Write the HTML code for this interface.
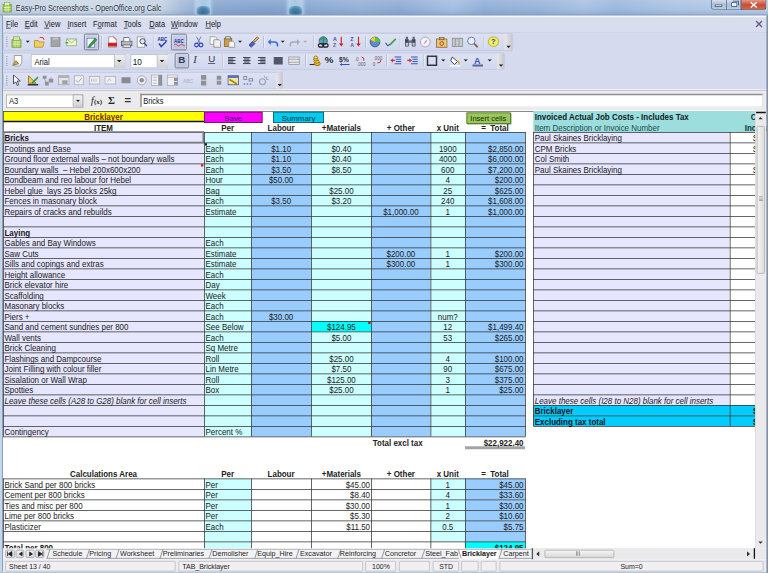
<!DOCTYPE html><html><head><meta charset="utf-8"><style>
html,body{margin:0;padding:0;width:768px;height:573px;overflow:hidden;background:#fff}
#w{position:absolute;left:0;top:0;width:1024px;height:764px;transform:scale(0.75);transform-origin:0 0;overflow:hidden;font-family:"Liberation Sans",sans-serif}
#w>div,#w>svg{position:absolute}
.t{white-space:nowrap;line-height:14px}
</style></head><body><div id="w">
<div style="left:0;top:0;width:1024px;height:21px;background:linear-gradient(90deg,#c3d1e2 0%,#cbd7e6 10%,#c4d2e3 21%,#a6bcd9 23.5%,#89a6cf 27%,#83a2cd 35%,#8ba9d2 42%,#93b0d6 47%,#8eaad4 52%,#a3bde0 59%,#90aed6 63%,#97b3da 70%,#a6c0e1 76%,#9ab7dc 80%,#abc3e3 88%,#b6cce6 100%)"></div>
<div style="left:0;top:0;width:1024px;height:21px;background:linear-gradient(180deg,rgba(255,255,255,.15) 0%,rgba(255,255,255,0) 60%,rgba(90,120,160,.25) 100%)"></div>
<div style="left:256.7px;top:0;width:28px;height:20px;background:linear-gradient(90deg,rgba(200,225,245,0) 0%,rgba(190,218,240,.75) 20%,rgba(175,205,232,.8) 50%,rgba(190,218,240,.75) 80%,rgba(200,225,245,0) 100%)"></div>
<div style="left:261.7px;top:8px;width:18px;height:12px;border-radius:40% 40% 30% 30%;background:radial-gradient(ellipse at 50% 80%,#2f6e98 0%,#4a84ad 50%,rgba(110,160,200,0) 100%)"></div>
<div style="left:380px;top:0;width:28px;height:20px;background:linear-gradient(90deg,rgba(200,225,245,0) 0%,rgba(190,218,240,.75) 20%,rgba(175,205,232,.8) 50%,rgba(190,218,240,.75) 80%,rgba(200,225,245,0) 100%)"></div>
<div style="left:385px;top:8px;width:18px;height:12px;border-radius:40% 40% 30% 30%;background:radial-gradient(ellipse at 50% 80%,#2f6e98 0%,#4a84ad 50%,rgba(110,160,200,0) 100%)"></div>
<div style="left:0;top:19px;width:1024px;height:2px;background:#8a9ab0;opacity:.7"></div>
<svg style="left:3px;top:2px" width="13" height="15" viewBox="0 0 13 15"><rect x="1" y="4" width="11" height="10" fill="#9cc54a" stroke="#6f9a2a"/><rect x="3" y="1" width="7" height="4" fill="#e8f0c0" stroke="#8fae50"/><path d="M2 8h9M2 11h9M5 5v9M8 5v9" stroke="#e8f5c8"/></svg>
<div class="t" style="left:20.5px;top:2.5px;font-size:11.5px;transform:scaleX(0.85);transform-origin:0 0;color:#1e2a3a;text-shadow:0 0 4px #e8f0f8,0 0 2px #e8f0f8">Easy-Pro Screenshots - OpenOffice.org Calc</div>
<div style="left:948px;top:0;width:40px;height:13px;border:1px solid #5a6f8a;border-top:none;border-radius:0 0 0 4px;background:linear-gradient(#d4e0ee,#a9bdd6 55%,#b8cce2);box-sizing:border-box"></div>
<div style="left:968px;top:0px;width:1px;height:13px;background:#5a6f8a"></div>
<div style="left:953px;top:6px;width:10px;height:3px;background:#f4f6fa;border:1px solid #3a4a60;box-sizing:border-box"></div>
<div style="left:975px;top:3px;width:8px;height:6px;border:1px solid #3a4a60;background:#e8eef6;box-sizing:border-box"></div>
<div style="left:977px;top:1px;width:8px;height:6px;border:1px solid #3a4a60;border-left:none;border-bottom:none;box-sizing:border-box"></div>
<div style="left:988px;top:0;width:34px;height:13px;border:1px solid #6a2a20;border-top:none;border-radius:0 0 4px 0;background:linear-gradient(#e49a86,#c94a30 55%,#d8664a);box-sizing:border-box"></div>
<svg style="left:999px;top:2px" width="12" height="9"><path d="M2 1l8 7M10 1l-8 7" stroke="#f4f4f4" stroke-width="2.2"/></svg>
<div style="left:0px;top:21px;width:4px;height:743px;background:#c3d6eb"></div>
<div style="left:3px;top:21px;width:1px;height:743px;background:#7a8ca4"></div>
<div style="left:1022px;top:21px;width:2px;height:743px;background:#8292a6"></div>
<div style="left:0px;top:762px;width:1024px;height:2px;background:#b5c8dd"></div>
<div style="left:4px;top:21px;width:1018px;height:22px;background:#d8ddf0"></div>
<div style="left:4px;top:21px;width:1018px;height:1.5px;background:#f8f9fd"></div>
<div style="left:4px;top:43px;width:1018px;height:1px;background:#c4c9de"></div>
<div class="t" style="left:8.3px;top:25px;font-size:11.5px;transform:scaleX(0.87);transform-origin:0 0;color:#1a1a1a"><u>F</u>ile</div>
<div class="t" style="left:33px;top:25px;font-size:11.5px;transform:scaleX(0.87);transform-origin:0 0;color:#1a1a1a"><u>E</u>dit</div>
<div class="t" style="left:59px;top:25px;font-size:11.5px;transform:scaleX(0.87);transform-origin:0 0;color:#1a1a1a"><u>V</u>iew</div>
<div class="t" style="left:89.6px;top:25px;font-size:11.5px;transform:scaleX(0.87);transform-origin:0 0;color:#1a1a1a"><u>I</u>nsert</div>
<div class="t" style="left:123.6px;top:25px;font-size:11.5px;transform:scaleX(0.87);transform-origin:0 0;color:#1a1a1a">F<u>o</u>rmat</div>
<div class="t" style="left:164.8px;top:25px;font-size:11.5px;transform:scaleX(0.87);transform-origin:0 0;color:#1a1a1a"><u>T</u>ools</div>
<div class="t" style="left:198.7px;top:25px;font-size:11.5px;transform:scaleX(0.87);transform-origin:0 0;color:#1a1a1a"><u>D</u>ata</div>
<div class="t" style="left:228px;top:25px;font-size:11.5px;transform:scaleX(0.87);transform-origin:0 0;color:#1a1a1a"><u>W</u>indow</div>
<div class="t" style="left:274.4px;top:25px;font-size:11.5px;transform:scaleX(0.87);transform-origin:0 0;color:#1a1a1a"><u>H</u>elp</div>
<svg style="left:1007px;top:27px" width="10" height="10"><path d="M1 1l8 8M9 1l-8 8" stroke="#5a6070" stroke-width="1.8"/></svg>
<div style="left:4px;top:44px;width:1018px;height:75px;background:#d5daef"></div>
<div style="left:4px;top:44px;width:680px;height:24px;background:linear-gradient(#dde2f3,#d2d8ee);border:1px solid #c0c6dc;border-radius:2px;box-sizing:border-box"></div>
<div style="left:8px;top:49px;width:2px;height:1px;background:#8a90a8"></div>
<div style="left:8px;top:52px;width:2px;height:1px;background:#8a90a8"></div>
<div style="left:8px;top:55px;width:2px;height:1px;background:#8a90a8"></div>
<div style="left:8px;top:58px;width:2px;height:1px;background:#8a90a8"></div>
<div style="left:8px;top:61px;width:2px;height:1px;background:#8a90a8"></div>
<div style="left:673px;top:45px;width:10px;height:22px;background:linear-gradient(90deg,#e8e8ec,#c8c8cc);"></div>
<svg style="left:675px;top:60px" width="7" height="5"><path d="M0 1h6l-3 3z" fill="#222"/></svg>
<div style="left:4px;top:70px;width:669px;height:23px;background:linear-gradient(#dde2f3,#d2d8ee);border:1px solid #c0c6dc;border-radius:2px;box-sizing:border-box"></div>
<div style="left:8px;top:75px;width:2px;height:1px;background:#8a90a8"></div>
<div style="left:8px;top:78px;width:2px;height:1px;background:#8a90a8"></div>
<div style="left:8px;top:81px;width:2px;height:1px;background:#8a90a8"></div>
<div style="left:8px;top:84px;width:2px;height:1px;background:#8a90a8"></div>
<div style="left:8px;top:87px;width:2px;height:1px;background:#8a90a8"></div>
<div style="left:663px;top:71px;width:9px;height:21px;background:linear-gradient(90deg,#e8e8ec,#c8c8cc);"></div>
<svg style="left:665px;top:85px" width="7" height="5"><path d="M0 1h6l-3 3z" fill="#222"/></svg>
<div style="left:4px;top:96px;width:373px;height:23px;background:linear-gradient(#dde2f3,#d2d8ee);border:1px solid #c0c6dc;border-radius:2px;box-sizing:border-box"></div>
<div style="left:8px;top:101px;width:2px;height:1px;background:#8a90a8"></div>
<div style="left:8px;top:104px;width:2px;height:1px;background:#8a90a8"></div>
<div style="left:8px;top:107px;width:2px;height:1px;background:#8a90a8"></div>
<div style="left:8px;top:110px;width:2px;height:1px;background:#8a90a8"></div>
<div style="left:8px;top:113px;width:2px;height:1px;background:#8a90a8"></div>
<div style="left:368px;top:97px;width:9px;height:21px;background:linear-gradient(90deg,#e8e8ec,#c8c8cc);"></div>
<svg style="left:370px;top:111px" width="7" height="5"><path d="M0 1h6l-3 3z" fill="#222"/></svg>
<svg style="left:13.7px;top:48.0px" width="16" height="16" viewBox="0 0 16 16"><rect x="2" y="5" width="12" height="10" fill="#a8cc55" stroke="#6e9a2c"/><path d="M3 8h10M3 11h10M6 6v9M10 6v9" stroke="#e4f2c0"/><rect x="4" y="1" width="8" height="5" fill="#d8e8a8" stroke="#88a850"/></svg>
<svg style="left:34.3px;top:54px" width="7" height="5"><path d="M0 0h6l-3 3z" fill="#222"/></svg>
<svg style="left:45.3px;top:48.0px" width="16" height="16" viewBox="0 0 16 16"><path d="M1 6h5l1 2h7l-2 7H1z" fill="#f0d060" stroke="#b08820"/><path d="M8 2l4 0 2 3" stroke="#e04040" stroke-width="1.5" fill="none"/></svg>
<svg style="left:66.3px;top:48.0px" width="16" height="16" viewBox="0 0 16 16"><rect x="2" y="2" width="12" height="12" fill="#a4a4a4" stroke="#8a8a8a"/><rect x="4" y="2" width="8" height="3" fill="#c0c0c0"/></svg>
<svg style="left:86.7px;top:48.0px" width="16" height="16" viewBox="0 0 16 16"><rect x="2" y="4" width="13" height="9" fill="#f4f4d8" stroke="#88a870"/><path d="M2 4l6.5 5 6.5-5" stroke="#88a870" fill="none"/><path d="M0 9h4" stroke="#40b040" stroke-width="2"/></svg>
<div style="left:112px;top:45px;width:20px;height:22px;background:linear-gradient(#c9d0e6,#b9c2df);border:1px solid #5c6478;border-radius:2px;box-sizing:border-box;box-shadow:inset 0 0 0 1px #e4e8f4"></div>
<svg style="left:114.0px;top:48.0px" width="16" height="16" viewBox="0 0 16 16"><rect x="2" y="3" width="10" height="12" fill="#fff" stroke="#6878a0"/><path d="M5 12l8-9 2 2-8 9-3 1z" fill="#30a040" stroke="#207030"/></svg>
<div style="left:135px;top:48px;width:1px;height:16px;background:#b0b6cc"></div>
<div style="left:136px;top:48px;width:1px;height:16px;background:#f0f2fa"></div>
<svg style="left:142.0px;top:48.0px" width="16" height="16" viewBox="0 0 16 16"><path d="M3 1h7l3 3v11H3z" fill="#fff" stroke="#888"/><rect x="2" y="9" width="12" height="5" fill="#d82020"/><path d="M9 1l4 4" stroke="#d82020"/></svg>
<svg style="left:161.3px;top:48.0px" width="16" height="16" viewBox="0 0 16 16"><rect x="1" y="7" width="14" height="6" fill="#b8b8c0" stroke="#505058"/><path d="M4 7V2h7l1 1v4" fill="#fff" stroke="#505058"/><rect x="3" y="12" width="10" height="3" fill="#fff" stroke="#505058"/></svg>
<svg style="left:181.3px;top:48.0px" width="16" height="16" viewBox="0 0 16 16"><path d="M2 1h8l2 2v12H2z" fill="#fff" stroke="#888"/><circle cx="9" cy="7" r="3.5" fill="#d8e8f8" stroke="#405070" stroke-width="1.3"/><path d="M11.5 9.5l3.5 4" stroke="#405070" stroke-width="2"/></svg>
<div style="left:204px;top:48px;width:1px;height:16px;background:#b0b6cc"></div>
<div style="left:205px;top:48px;width:1px;height:16px;background:#f0f2fa"></div>
<svg style="left:209.3px;top:48.0px" width="16" height="16" viewBox="0 0 16 16"><text x="1" y="7" font-size="6" font-family="Liberation Sans" font-weight="bold" fill="#2030a0">ABC</text><path d="M3 10l3 4 7-7" stroke="#3040c0" stroke-width="2" fill="none"/></svg>
<div style="left:228px;top:45px;width:21px;height:22px;background:linear-gradient(#c9d0e6,#b9c2df);border:1px solid #5c6478;border-radius:2px;box-sizing:border-box;box-shadow:inset 0 0 0 1px #e4e8f4"></div>
<svg style="left:230.7px;top:48.0px" width="16" height="16" viewBox="0 0 16 16"><text x="1" y="9" font-size="6" font-family="Liberation Sans" font-weight="bold" fill="#2030a0">ABC</text><path d="M1 12q2-2 4 0t4 0 4 0 3 0" stroke="#e02020" fill="none"/></svg>
<svg style="left:257.3px;top:48.0px" width="16" height="16" viewBox="0 0 16 16"><path d="M5 1l5 9M11 1l-5 9" stroke="#707890" stroke-width="1.3"/><circle cx="5" cy="12" r="2.5" fill="none" stroke="#3040c0" stroke-width="1.5"/><circle cx="11" cy="12" r="2.5" fill="none" stroke="#3040c0" stroke-width="1.5"/></svg>
<svg style="left:278.7px;top:48.0px" width="16" height="16" viewBox="0 0 16 16"><path d="M1 1h7l2 2v8H1z" fill="#f8f8f8" stroke="#909090"/><path d="M6 5h7l2 2v8H6z" fill="#f0f0f0" stroke="#808080"/></svg>
<svg style="left:298.0px;top:48.0px" width="16" height="16" viewBox="0 0 16 16"><rect x="1" y="3" width="10" height="11" fill="#c8a040" stroke="#806020"/><rect x="3" y="1" width="6" height="3" fill="#ddd" stroke="#666"/><path d="M7 7h6l2 2v6H7z" fill="#f4f4f4" stroke="#808080"/></svg>
<svg style="left:317px;top:54px" width="7" height="5"><path d="M0 0h6l-3 3z" fill="#222"/></svg>
<svg style="left:330.0px;top:48.0px" width="16" height="16" viewBox="0 0 16 16"><path d="M2 12l5-5 3 3-5 5z" fill="#5060c0" stroke="#303880"/><path d="M8 6l5-5 2 2-5 5z" fill="#d8b060" stroke="#806020"/></svg>
<div style="left:350.7px;top:48px;width:1px;height:16px;background:#b0b6cc"></div>
<div style="left:351.7px;top:48px;width:1px;height:16px;background:#f0f2fa"></div>
<svg style="left:356.0px;top:48.0px" width="16" height="16" viewBox="0 0 16 16"><path d="M5 4L1 8l4 4V9h5a3 3 0 0 1 3 3v2h2v-2a5 5 0 0 0-5-5H5z" fill="#3a6ad8"/></svg>
<svg style="left:374.3px;top:54px" width="7" height="5"><path d="M0 0h6l-3 3z" fill="#222"/></svg>
<svg style="left:385.3px;top:48.0px" width="16" height="16" viewBox="0 0 16 16"><path d="M11 4l4 4-4 4V9H6a3 3 0 0 0-3 3v2H1v-2a5 5 0 0 1 5-5h5z" fill="#a8acb8"/></svg>
<svg style="left:403.7px;top:54px" width="7" height="5"><path d="M0 0h6l-3 3z" fill="#a8a8b0"/></svg>
<div style="left:418px;top:48px;width:1px;height:16px;background:#b0b6cc"></div>
<div style="left:419px;top:48px;width:1px;height:16px;background:#f0f2fa"></div>
<svg style="left:423.3px;top:48.0px" width="16" height="16" viewBox="0 0 16 16"><circle cx="8" cy="6.5" r="5.5" fill="#58a0c8" stroke="#2a5a7a"/><path d="M3 5q5-3 10 0M8 1v11" stroke="#2a8040" stroke-width="1.2" fill="none"/><path d="M4 4l3 2 3-3 2 2" fill="#50b050"/><ellipse cx="5" cy="12.5" rx="3.5" ry="2.3" fill="none" stroke="#202020" stroke-width="1.5"/><ellipse cx="11" cy="12.5" rx="3.5" ry="2.3" fill="none" stroke="#202020" stroke-width="1.5"/></svg>
<svg style="left:444.0px;top:48.0px" width="16" height="16" viewBox="0 0 16 16"><text x="0" y="7" font-size="7" font-family="Liberation Sans" font-weight="bold" fill="#3050b0">A</text><text x="0" y="15" font-size="7" font-family="Liberation Sans" font-weight="bold" fill="#606070">Z</text><path d="M11 1v11" stroke="#d02020" stroke-width="1.5"/><path d="M8 10l3 4 3-4z" fill="#d02020"/></svg>
<svg style="left:466.7px;top:48.0px" width="16" height="16" viewBox="0 0 16 16"><text x="0" y="7" font-size="7" font-family="Liberation Sans" font-weight="bold" fill="#3050b0">Z</text><text x="0" y="15" font-size="7" font-family="Liberation Sans" font-weight="bold" fill="#606070">A</text><path d="M11 1v11" stroke="#d02020" stroke-width="1.5"/><path d="M8 10l3 4 3-4z" fill="#d02020"/></svg>
<div style="left:486.7px;top:48px;width:1px;height:16px;background:#b0b6cc"></div>
<div style="left:487.7px;top:48px;width:1px;height:16px;background:#f0f2fa"></div>
<svg style="left:492.0px;top:48.0px" width="16" height="16" viewBox="0 0 16 16"><circle cx="8" cy="8" r="6.5" fill="#5a8ad8" stroke="#404860"/><path d="M8 8V1.5A6.5 6.5 0 0 1 14.5 8z" fill="#60c040"/><path d="M8 8L2 5A6.5 6.5 0 0 1 8 1.5z" fill="#f0d020"/></svg>
<svg style="left:512.7px;top:48.0px" width="16" height="16" viewBox="0 0 16 16"><path d="M1 9l3 4 3-2" stroke="#4050a0" stroke-width="1.5" fill="none"/><path d="M6 11l8-8 1.5 1.5-8 8z" fill="#40a040"/></svg>
<div style="left:533.3px;top:48px;width:1px;height:16px;background:#b0b6cc"></div>
<div style="left:534.3px;top:48px;width:1px;height:16px;background:#f0f2fa"></div>
<svg style="left:539.3px;top:48.0px" width="16" height="16" viewBox="0 0 16 16"><rect x="1" y="4" width="5" height="10" rx="1" fill="#404858"/><rect x="10" y="4" width="5" height="10" rx="1" fill="#404858"/><rect x="5" y="6" width="6" height="3" fill="#606878"/><rect x="2" y="1" width="3" height="4" fill="#606878"/><rect x="11" y="1" width="3" height="4" fill="#606878"/><rect x="2" y="9" width="3" height="4" fill="#c0c8d8"/><rect x="11" y="9" width="3" height="4" fill="#c0c8d8"/></svg>
<svg style="left:559.3px;top:48.0px" width="16" height="16" viewBox="0 0 16 16"><circle cx="8" cy="8" r="6.5" fill="#f4f4f8" stroke="#9098b0"/><path d="M11 4L7 9l-2 3 4-4z" fill="#e03030"/></svg>
<svg style="left:580.7px;top:48.0px" width="16" height="16" viewBox="0 0 16 16"><rect x="1" y="4" width="14" height="11" fill="#e8c870" stroke="#806020"/><rect x="5" y="2" width="6" height="3" fill="none" stroke="#806020"/><circle cx="8" cy="10" r="2.5" fill="none" stroke="#d03030" stroke-width="1.3"/></svg>
<svg style="left:602.0px;top:48.0px" width="16" height="16" viewBox="0 0 16 16"><rect x="1" y="3" width="14" height="11" fill="#c8c8d0" stroke="#888"/><path d="M5 3v11M10 3v11" stroke="#888"/></svg>
<svg style="left:622.0px;top:48.0px" width="16" height="16" viewBox="0 0 16 16"><circle cx="6.5" cy="6.5" r="5" fill="#e8f0fa" stroke="#6070a0" stroke-width="1.2"/><path d="M10 10l5 5" stroke="#807050" stroke-width="2.5"/></svg>
<div style="left:644px;top:48px;width:1px;height:16px;background:#b0b6cc"></div>
<div style="left:645px;top:48px;width:1px;height:16px;background:#f0f2fa"></div>
<svg style="left:650.0px;top:48.0px" width="16" height="16" viewBox="0 0 16 16"><ellipse cx="8" cy="7.5" rx="7" ry="6.5" fill="#f0f060" stroke="#a0a020"/><path d="M5 15l2-3h2z" fill="#f0f060"/><text x="4.5" y="11" font-size="10" font-family="Liberation Sans" font-weight="bold" fill="#5030a0">?</text></svg>
<svg style="left:14.7px;top:73.3px" width="16" height="16" viewBox="0 0 16 16"><path d="M4 1h10v10l-3 4H4z" fill="#fff" stroke="#888"/><path d="M2 14l4-6 4 4z" fill="#d8b060" stroke="#806020"/></svg>
<div style="left:41.3px;top:72px;width:125.4px;height:18.7px;background:#fff;border:1px solid #a8b0c8;box-sizing:border-box"></div>
<div style="left:152px;top:73px;width:13.3px;height:16.7px;background:linear-gradient(#f0f0f0,#d0d0d4);border-left:1px solid #a8b0c8"></div>
<svg style="left:155.7px;top:80.3px" width="7" height="5"><path d="M0 0h6l-3 3z" fill="#222"/></svg>
<div class="t" style="left:46px;top:74.5px;font-size:11px;color:#111;transform:scaleX(0.92);transform-origin:0 0">Arial</div>
<div style="left:173.9px;top:72px;width:50.1px;height:18.7px;background:#fff;border:1px solid #a8b0c8;box-sizing:border-box"></div>
<div style="left:209.3px;top:73px;width:13.4px;height:16.7px;background:linear-gradient(#f0f0f0,#d0d0d4);border-left:1px solid #a8b0c8"></div>
<svg style="left:213px;top:80.3px" width="7" height="5"><path d="M0 0h6l-3 3z" fill="#222"/></svg>
<div class="t" style="left:177px;top:74.5px;font-size:11px;color:#111">10</div>
<div style="left:233.3px;top:71.3px;width:18.7px;height:20px;background:linear-gradient(#c9d0e6,#b9c2df);border:1px solid #5c6478;border-radius:2px;box-sizing:border-box;box-shadow:inset 0 0 0 1px #e4e8f4"></div>
<div class="t" style="left:237.5px;top:73px;font-size:13px;font-weight:bold;color:#30384a">B</div>
<div class="t" style="left:257.5px;top:73px;font-size:14px;font-style:italic;color:#30384a;font-family:'Liberation Serif',serif">I</div>
<div class="t" style="left:277.5px;top:72px;font-size:13px;color:#30384a"><u>U</u></div>
<div style="left:296px;top:73px;width:1px;height:16px;background:#b0b6cc"></div>
<div style="left:297px;top:73px;width:1px;height:16px;background:#f0f2fa"></div>
<svg style="left:301.3px;top:73.3px" width="16" height="16" viewBox="0 0 16 16"><rect x="3" y="3" width="10" height="1.4" fill="#404858"/><rect x="3" y="5" width="7" height="1.4" fill="#404858"/><rect x="3" y="7" width="10" height="1.4" fill="#404858"/><rect x="3" y="9" width="7" height="1.4" fill="#404858"/><rect x="3" y="11" width="10" height="1.4" fill="#404858"/></svg>
<svg style="left:321.3px;top:73.3px" width="16" height="16" viewBox="0 0 16 16"><rect x="3.0" y="3" width="10" height="1.4" fill="#404858"/><rect x="4.5" y="5" width="7" height="1.4" fill="#404858"/><rect x="3.0" y="7" width="10" height="1.4" fill="#404858"/><rect x="4.5" y="9" width="7" height="1.4" fill="#404858"/><rect x="3.0" y="11" width="10" height="1.4" fill="#404858"/></svg>
<svg style="left:341.3px;top:73.3px" width="16" height="16" viewBox="0 0 16 16"><rect x="3" y="3" width="10" height="1.4" fill="#404858"/><rect x="6" y="5" width="7" height="1.4" fill="#404858"/><rect x="3" y="7" width="10" height="1.4" fill="#404858"/><rect x="6" y="9" width="7" height="1.4" fill="#404858"/><rect x="3" y="11" width="10" height="1.4" fill="#404858"/></svg>
<svg style="left:363.3px;top:73.3px" width="16" height="16" viewBox="0 0 16 16"><rect x="2" y="3" width="12" height="10" fill="#505868"/></svg>
<svg style="left:384.0px;top:73.3px" width="16" height="16" viewBox="0 0 16 16"><rect x="1" y="3" width="14" height="10" fill="#e8e8e8" stroke="#909098"/><path d="M1 6h14M1 10h14" stroke="#909098"/></svg>
<div style="left:406.7px;top:73px;width:1px;height:16px;background:#b0b6cc"></div>
<div style="left:407.7px;top:73px;width:1px;height:16px;background:#f0f2fa"></div>
<svg style="left:412.0px;top:73.3px" width="16" height="16" viewBox="0 0 16 16"><path d="M1 13h7" stroke="#303030" stroke-width="1.5"/><ellipse cx="11" cy="12" rx="4" ry="2.5" fill="#e8b828" stroke="#8a6010"/><ellipse cx="10" cy="9" rx="3.5" ry="2.2" fill="#f0c838" stroke="#8a6010"/><ellipse cx="9" cy="6" rx="3" ry="2" fill="#f4d040" stroke="#8a6010"/><ellipse cx="9" cy="3.5" rx="2.5" ry="1.8" fill="#f8e060" stroke="#8a6010"/></svg>
<div class="t" style="left:433px;top:73px;font-size:13px;font-weight:bold;color:#282830">%</div>
<svg style="left:452.0px;top:73.3px" width="16" height="16" viewBox="0 0 16 16"><text x="0" y="9" font-size="9" font-family="Liberation Sans" font-weight="bold" fill="#303040">$%</text><path d="M2 13h12" stroke="#3050c0" stroke-width="1.5"/><path d="M1 13l3-2v4z" fill="#3050c0"/></svg>
<svg style="left:473.3px;top:73.3px" width="16" height="16" viewBox="0 0 16 16"><text x="0" y="8" font-size="6" font-family="Liberation Sans" fill="#606070">.0</text><text x="3" y="15" font-size="6" font-family="Liberation Sans" fill="#606070">.000</text><path d="M9 3q4 0 3 5" stroke="#d03030" fill="none" stroke-width="1.3"/></svg>
<svg style="left:494.7px;top:73.3px" width="16" height="16" viewBox="0 0 16 16"><text x="3" y="7" font-size="6" font-family="Liberation Sans" fill="#606070">.000</text><text x="2" y="15" font-size="6" font-family="Liberation Sans" fill="#606070">0</text><path d="M8 11q5 0 5-4" stroke="#d03030" fill="none" stroke-width="1.3"/></svg>
<div style="left:514.7px;top:73px;width:1px;height:16px;background:#b0b6cc"></div>
<div style="left:515.7px;top:73px;width:1px;height:16px;background:#f0f2fa"></div>
<svg style="left:520.0px;top:73.3px" width="16" height="16" viewBox="0 0 16 16"><path d="M6 3h9M8 6h7M8 9h7M6 12h9" stroke="#3050c0" stroke-width="1.3"/><path d="M1 7.5h6" stroke="#d03030" stroke-width="1.5"/><path d="M1 7.5l3-3v6z" fill="#d03030"/></svg>
<svg style="left:542.0px;top:73.3px" width="16" height="16" viewBox="0 0 16 16"><path d="M6 3h9M8 6h7M8 9h7M6 12h9" stroke="#3050c0" stroke-width="1.3"/><path d="M1 7.5h6" stroke="#d03030" stroke-width="1.5"/><path d="M7 7.5l-3-3v6z" fill="#d03030"/></svg>
<div style="left:564px;top:73px;width:1px;height:16px;background:#b0b6cc"></div>
<div style="left:565px;top:73px;width:1px;height:16px;background:#f0f2fa"></div>
<svg style="left:567.7px;top:73.3px" width="16" height="16" viewBox="0 0 16 16"><rect x="2" y="2" width="12" height="12" fill="none" stroke="#303848" stroke-width="2"/></svg>
<svg style="left:587.7px;top:79.3px" width="7" height="5"><path d="M0 0h6l-3 3z" fill="#222"/></svg>
<svg style="left:598.7px;top:73.3px" width="16" height="16" viewBox="0 0 16 16"><path d="M4 3l7 6-4 4-5-5z" fill="#fff" stroke="#303848" stroke-width="1.2"/><path d="M12 8q2 3 1 5" stroke="#e0b040" stroke-width="2" fill="none"/><rect x="1" y="14" width="14" height="2" fill="#fff"/></svg>
<svg style="left:618.3px;top:79.3px" width="7" height="5"><path d="M0 0h6l-3 3z" fill="#222"/></svg>
<svg style="left:628.7px;top:73.3px" width="16" height="16" viewBox="0 0 16 16"><text x="3" y="12" font-size="12" font-family="Liberation Sans" font-weight="bold" fill="#4050c0">A</text><rect x="1" y="13" width="14" height="3" fill="#5a6a98"/></svg>
<svg style="left:649.7px;top:79.3px" width="7" height="5"><path d="M0 0h6l-3 3z" fill="#222"/></svg>
<svg style="left:14.7px;top:99.3px" width="16" height="16" viewBox="0 0 16 16"><path d="M3 1v12l3-3 2 5 2-1-2-5h4z" fill="#fff" stroke="#202028"/></svg>
<svg style="left:36.0px;top:99.3px" width="16" height="16" viewBox="0 0 16 16"><path d="M1 14h14" stroke="#303040" stroke-width="2"/><path d="M2 2v10h10z" fill="#f0d040" stroke="#806010"/><path d="M6 11l8-8 1.5 1.5-8 8z" fill="#30a040"/></svg>
<svg style="left:56.0px;top:99.3px" width="16" height="16" viewBox="0 0 16 16"><rect x="1" y="2" width="5" height="4" fill="#909098"/><rect x="9" y="6" width="6" height="5" fill="#909098"/><rect x="4" y="10" width="5" height="5" fill="#909098"/><path d="M3 6l3 5M12 6v-2" stroke="#909098"/></svg>
<svg style="left:76.7px;top:99.3px" width="16" height="16" viewBox="0 0 16 16"><rect x="1" y="2" width="14" height="12" fill="#e4e4e8" stroke="#a0a0a8"/><rect x="1" y="2" width="14" height="3" fill="#b0b0b8"/><rect x="6" y="8" width="7" height="5" fill="#a0a0a8"/></svg>
<svg style="left:96.7px;top:99.3px" width="16" height="16" viewBox="0 0 16 16"><rect x="2" y="2" width="12" height="12" fill="#f0f0f4" stroke="#a8a8b0"/><path d="M4 8l3 3 5-6" stroke="#a0a0a8" stroke-width="1.3" fill="none"/></svg>
<svg style="left:118.0px;top:99.3px" width="16" height="16" viewBox="0 0 16 16"><rect x="1" y="3" width="14" height="10" fill="#f0f0f4" stroke="#a8a8b0"/><path d="M4 6v4M7 6v4M10 6v4" stroke="#a8a8b0"/></svg>
<svg style="left:138.7px;top:99.3px" width="16" height="16" viewBox="0 0 16 16"><rect x="1" y="3" width="14" height="10" fill="#f0f0f4" stroke="#a8a8b0"/><path d="M4 10l3-4 2 3" stroke="#a8a8b0" fill="none"/></svg>
<svg style="left:160.0px;top:99.3px" width="16" height="16" viewBox="0 0 16 16"><rect x="2" y="4" width="12" height="8" fill="#8a8a90"/></svg>
<svg style="left:180.7px;top:99.3px" width="16" height="16" viewBox="0 0 16 16"><circle cx="8" cy="8" r="6" fill="#f0f0f4" stroke="#a8a8b0" stroke-width="1.3"/><circle cx="8" cy="8" r="3" fill="#909098"/></svg>
<svg style="left:200.7px;top:99.3px" width="16" height="16" viewBox="0 0 16 16"><rect x="1" y="1" width="14" height="14" fill="#f0f0f4" stroke="#a8a8b0"/><rect x="10" y="1" width="5" height="14" fill="#909098"/><path d="M3 4h5M3 8h5M3 12h5" stroke="#a8a8b0"/></svg>
<svg style="left:222.0px;top:99.3px" width="16" height="16" viewBox="0 0 16 16"><rect x="1" y="1" width="14" height="14" fill="#f0f0f4" stroke="#a8a8b0"/><rect x="10" y="5" width="5" height="4" fill="#909098"/><rect x="10" y="10" width="5" height="4" fill="#909098"/><path d="M1 4h14" stroke="#a8a8b0"/></svg>
<svg style="left:242.7px;top:99.3px" width="16" height="16" viewBox="0 0 16 16"><text x="1" y="11" font-size="6.5" font-family="Liberation Sans" fill="#b0b0b8">ABC</text></svg>
<svg style="left:262.7px;top:99.3px" width="16" height="16" viewBox="0 0 16 16"><rect x="5" y="1" width="7" height="14" fill="#909098"/><path d="M5 8h7" stroke="#f0f0f4"/></svg>
<svg style="left:283.3px;top:99.3px" width="16" height="16" viewBox="0 0 16 16"><rect x="6" y="2" width="6" height="12" fill="#909098"/><path d="M6 8h6" stroke="#f0f0f4"/></svg>
<svg style="left:303.3px;top:99.3px" width="16" height="16" viewBox="0 0 16 16"><rect x="1" y="2" width="14" height="12" fill="#f4e8a0" stroke="#404880"/><rect x="1" y="2" width="14" height="3" fill="#6070c0"/><path d="M3 7l10 6" stroke="#a08020" stroke-width="2"/></svg>
<svg style="left:323.3px;top:99.3px" width="16" height="16" viewBox="0 0 16 16"><rect x="2" y="3" width="4" height="4" fill="none" stroke="#707888"/><rect x="9" y="6" width="5" height="3" fill="none" stroke="#707888"/><path d="M2 13h2M6 13h2M10 13h2" stroke="#3050c0" stroke-width="1.5"/></svg>
<svg style="left:344.0px;top:99.3px" width="16" height="16" viewBox="0 0 16 16"><circle cx="6" cy="10" r="4" fill="none" stroke="#a0a0a8" stroke-width="1.5"/><path d="M8 2l2 3M12 3l-1 3M14 7h-3" stroke="#a0a0a8" stroke-width="1.3"/></svg>
<div style="left:4px;top:119px;width:1018px;height:29px;background:#ebebee"></div>
<div style="left:4px;top:119.5px;width:1018px;height:1.5px;background:#b8bccc"></div>
<div style="left:8px;top:125.7px;width:102.7px;height:18.2px;background:#fff;border:1px solid #a0a4b4;box-sizing:border-box"></div>
<div style="left:96.8px;top:126px;width:14.4px;height:16.4px;background:linear-gradient(#f4f4f4,#d4d4d8);border:1px solid #a0a0a8;box-sizing:border-box"></div>
<svg style="left:101px;top:133px" width="7" height="5"><path d="M0 0h6l-3 3z" fill="#222"/></svg>
<div class="t" style="left:12px;top:128px;font-size:11px;color:#222;transform:scaleX(0.92);transform-origin:0 0">A3</div>
<div class="t" style="left:121px;top:126.5px;font-size:15px;font-family:'Liberation Serif',serif;color:#333"><i>f</i><span style="font-size:9.5px;font-weight:bold">(x)</span></div>
<div class="t" style="left:144px;top:127px;font-size:14px;font-weight:bold;color:#222;font-family:'Liberation Serif',serif">&Sigma;</div>
<div class="t" style="left:166px;top:126.5px;font-size:15px;color:#333;font-weight:bold">=</div>
<div style="left:187.3px;top:125px;width:830px;height:18px;background:#fff;border-top:2px solid #8c8c90;border-left:2px solid #8c8c90;border-right:1px solid #d8d8dc;border-bottom:1px solid #e4e4e8;box-sizing:border-box"></div>
<div class="t" style="left:191px;top:127.5px;font-size:11px;color:#111;transform:scaleX(0.9);transform-origin:0 0">Bricks</div>
<div style="left:4px;top:147px;width:1003px;height:584px;background:#fff"></div>
<div style="left:4px;top:148px;width:1003px;height:1px;background:#606060"></div>
<div style="left:4px;top:176px;width:268px;height:406px;background:#e6e6ff"></div>
<div style="left:272px;top:176px;width:63px;height:406px;background:#ccffff"></div>
<div style="left:335px;top:176px;width:79.60000000000002px;height:406px;background:#99ccff"></div>
<div style="left:414.6px;top:176px;width:80.39999999999998px;height:406px;background:#ccffff"></div>
<div style="left:495px;top:176px;width:79px;height:406px;background:#99ccff"></div>
<div style="left:574px;top:176px;width:46px;height:406px;background:#ccffff"></div>
<div style="left:620px;top:176px;width:80px;height:406px;background:#99ccff"></div>
<div style="left:414.6px;top:428px;width:80.39999999999998px;height:14px;background:#00ffff"></div>
<div style="left:272px;top:638px;width:63px;height:14px;background:#ccffff"></div>
<div style="left:574px;top:638px;width:46px;height:14px;background:#ccffff"></div>
<div style="left:620px;top:638px;width:80px;height:14px;background:#99ccff"></div>
<div style="left:272px;top:652px;width:63px;height:14px;background:#ccffff"></div>
<div style="left:574px;top:652px;width:46px;height:14px;background:#ccffff"></div>
<div style="left:620px;top:652px;width:80px;height:14px;background:#99ccff"></div>
<div style="left:272px;top:666px;width:63px;height:14px;background:#ccffff"></div>
<div style="left:574px;top:666px;width:46px;height:14px;background:#ccffff"></div>
<div style="left:620px;top:666px;width:80px;height:14px;background:#99ccff"></div>
<div style="left:272px;top:680px;width:63px;height:14px;background:#ccffff"></div>
<div style="left:574px;top:680px;width:46px;height:14px;background:#ccffff"></div>
<div style="left:620px;top:680px;width:80px;height:14px;background:#99ccff"></div>
<div style="left:272px;top:694px;width:63px;height:14px;background:#ccffff"></div>
<div style="left:574px;top:694px;width:46px;height:14px;background:#ccffff"></div>
<div style="left:620px;top:694px;width:80px;height:14px;background:#99ccff"></div>
<div style="left:272px;top:708px;width:63px;height:14px;background:#ccffff"></div>
<div style="left:574px;top:708px;width:46px;height:14px;background:#ccffff"></div>
<div style="left:620px;top:708px;width:80px;height:14px;background:#99ccff"></div>
<div style="left:272px;top:722px;width:63px;height:14px;background:#ccffff"></div>
<div style="left:620px;top:722px;width:80px;height:14px;background:#00ffff"></div>
<div style="left:4px;top:148px;width:268px;height:14px;background:#ffff00"></div>
<div style="left:4px;top:148px;width:268px;height:1px;background:#333"></div>
<div style="left:4px;top:161px;width:268px;height:2px;background:#111"></div>
<div style="left:4px;top:148px;width:1px;height:42px;background:#444"></div>
<div style="left:272px;top:149px;width:78px;height:15px;background:#ff00ff;border:1px solid #4a2040;box-sizing:border-box"></div>
<div class="t" style="left:272px;width:78px;text-align:center;top:150px;font-size:10.5px;color:#2a0060">Save</div>
<div style="left:364px;top:149px;width:68px;height:15px;background:#00ccf0;border:1px solid #204a60;box-sizing:border-box"></div>
<div class="t" style="left:364px;width:68px;text-align:center;top:150px;font-size:10.5px;color:#062840">Summary</div>
<div style="left:621.5px;top:149.5px;width:59px;height:15px;background:#98c858;border:1px solid #4a6a28;box-sizing:border-box;box-shadow:1px 1px 0 #8a9a70"></div>
<div class="t" style="left:621.5px;width:59px;text-align:center;top:151px;font-size:10px;color:#202810">Insert cells</div>
<div class="t" style="left:4px;width:268px;text-align:center;top:149px;transform:scaleX(0.885);transform-origin:50% 0;font-size:12px;font-weight:bold;color:#7a2410">Bricklayer</div>
<div class="t" style="left:4px;width:268px;text-align:center;top:163px;transform:scaleX(0.885);transform-origin:50% 0;font-size:12px;font-weight:bold;color:#222">ITEM</div>
<div class="t" style="left:272px;width:63px;text-align:center;top:163px;transform:scaleX(0.885);transform-origin:50% 0;font-size:12px;font-weight:bold;color:#222">Per</div>
<div class="t" style="left:335px;width:79.60000000000002px;text-align:center;top:163px;transform:scaleX(0.885);transform-origin:50% 0;font-size:12px;font-weight:bold;color:#222">Labour</div>
<div class="t" style="left:414.6px;width:80.39999999999998px;text-align:center;top:163px;transform:scaleX(0.885);transform-origin:50% 0;font-size:12px;font-weight:bold;color:#222">+Materials</div>
<div class="t" style="left:495px;width:79px;text-align:center;top:163px;transform:scaleX(0.885);transform-origin:50% 0;font-size:12px;font-weight:bold;color:#222">+ Other</div>
<div class="t" style="left:574px;width:46px;text-align:center;top:163px;transform:scaleX(0.885);transform-origin:50% 0;font-size:12px;font-weight:bold;color:#222">x Unit</div>
<div class="t" style="left:620px;width:80px;text-align:center;top:163px;transform:scaleX(0.885);transform-origin:50% 0;font-size:12px;font-weight:bold;color:#222">=&nbsp; Total</div>
<div style="left:711px;top:148px;width:296px;height:28px;background:#9cdddd"></div>
<div class="t" style="left:713px;top:149px;transform:scaleX(0.885);transform-origin:0 0;font-size:12px;font-weight:bold;color:#0e2222">Invoiced Actual Job Costs - Includes Tax</div>
<div class="t" style="left:713px;top:163px;transform:scaleX(0.885);transform-origin:0 0;font-size:12px;color:#1e4a4a">Item Description or Invoice Number</div>
<div class="t" style="left:1001px;top:149px;font-size:12px;transform:scaleX(0.885);transform-origin:0 0;font-weight:bold;color:#10302f">Cost</div>
<div class="t" style="left:993px;top:163px;font-size:12px;transform:scaleX(0.885);transform-origin:0 0;font-weight:bold;color:#10302f">Incl Tax</div>
<div style="left:711px;top:176px;width:261px;height:364px;background:#e6e6ff"></div>
<div style="left:711px;top:540px;width:261px;height:14px;background:#00ccff"></div>
<div style="left:972px;top:540px;width:35px;height:14px;background:#00ccff"></div>
<div style="left:711px;top:554px;width:261px;height:14px;background:#00ccff"></div>
<div style="left:972px;top:554px;width:35px;height:14px;background:#00ccff"></div>
<div style="left:4px;top:176px;width:697px;height:1px;background:#333"></div>
<div style="left:4px;top:190px;width:697px;height:1px;background:#333"></div>
<div style="left:4px;top:204px;width:697px;height:1px;background:#333"></div>
<div style="left:4px;top:218px;width:697px;height:1px;background:#333"></div>
<div style="left:4px;top:232px;width:697px;height:1px;background:#333"></div>
<div style="left:4px;top:246px;width:697px;height:1px;background:#333"></div>
<div style="left:4px;top:260px;width:697px;height:1px;background:#333"></div>
<div style="left:4px;top:274px;width:697px;height:1px;background:#333"></div>
<div style="left:4px;top:288px;width:697px;height:1px;background:#333"></div>
<div style="left:4px;top:302px;width:697px;height:1px;background:#333"></div>
<div style="left:4px;top:316px;width:697px;height:1px;background:#333"></div>
<div style="left:4px;top:330px;width:697px;height:1px;background:#333"></div>
<div style="left:4px;top:344px;width:697px;height:1px;background:#333"></div>
<div style="left:4px;top:358px;width:697px;height:1px;background:#333"></div>
<div style="left:4px;top:372px;width:697px;height:1px;background:#333"></div>
<div style="left:4px;top:386px;width:697px;height:1px;background:#333"></div>
<div style="left:4px;top:400px;width:697px;height:1px;background:#333"></div>
<div style="left:4px;top:414px;width:697px;height:1px;background:#333"></div>
<div style="left:4px;top:428px;width:697px;height:1px;background:#333"></div>
<div style="left:4px;top:442px;width:697px;height:1px;background:#333"></div>
<div style="left:4px;top:456px;width:697px;height:1px;background:#333"></div>
<div style="left:4px;top:470px;width:697px;height:1px;background:#333"></div>
<div style="left:4px;top:484px;width:697px;height:1px;background:#333"></div>
<div style="left:4px;top:498px;width:697px;height:1px;background:#333"></div>
<div style="left:4px;top:512px;width:697px;height:1px;background:#333"></div>
<div style="left:4px;top:526px;width:697px;height:1px;background:#333"></div>
<div style="left:4px;top:540px;width:697px;height:1px;background:#333"></div>
<div style="left:4px;top:554px;width:697px;height:1px;background:#333"></div>
<div style="left:4px;top:568px;width:697px;height:1px;background:#333"></div>
<div style="left:4px;top:582px;width:697px;height:1px;background:#333"></div>
<div style="left:4px;top:176px;width:1px;height:406px;background:#333"></div>
<div style="left:272px;top:176px;width:1px;height:406px;background:#333"></div>
<div style="left:335px;top:176px;width:1px;height:406px;background:#333"></div>
<div style="left:414.6px;top:176px;width:1px;height:406px;background:#333"></div>
<div style="left:495px;top:176px;width:1px;height:406px;background:#333"></div>
<div style="left:574px;top:176px;width:1px;height:406px;background:#333"></div>
<div style="left:620px;top:176px;width:1px;height:406px;background:#333"></div>
<div style="left:700px;top:176px;width:1px;height:406px;background:#333"></div>
<div style="left:4px;top:175px;width:268px;height:16px;border:2px solid #7a7a7a;box-sizing:border-box"></div>
<div style="left:711px;top:176px;width:296px;height:1px;background:#333"></div>
<div style="left:711px;top:190px;width:296px;height:1px;background:#333"></div>
<div style="left:711px;top:204px;width:296px;height:1px;background:#333"></div>
<div style="left:711px;top:218px;width:296px;height:1px;background:#333"></div>
<div style="left:711px;top:232px;width:296px;height:1px;background:#333"></div>
<div style="left:711px;top:246px;width:296px;height:1px;background:#333"></div>
<div style="left:711px;top:260px;width:296px;height:1px;background:#333"></div>
<div style="left:711px;top:274px;width:296px;height:1px;background:#333"></div>
<div style="left:711px;top:288px;width:296px;height:1px;background:#333"></div>
<div style="left:711px;top:302px;width:296px;height:1px;background:#333"></div>
<div style="left:711px;top:316px;width:296px;height:1px;background:#333"></div>
<div style="left:711px;top:330px;width:296px;height:1px;background:#333"></div>
<div style="left:711px;top:344px;width:296px;height:1px;background:#333"></div>
<div style="left:711px;top:358px;width:296px;height:1px;background:#333"></div>
<div style="left:711px;top:372px;width:296px;height:1px;background:#333"></div>
<div style="left:711px;top:386px;width:296px;height:1px;background:#333"></div>
<div style="left:711px;top:400px;width:296px;height:1px;background:#333"></div>
<div style="left:711px;top:414px;width:296px;height:1px;background:#333"></div>
<div style="left:711px;top:428px;width:296px;height:1px;background:#333"></div>
<div style="left:711px;top:442px;width:296px;height:1px;background:#333"></div>
<div style="left:711px;top:456px;width:296px;height:1px;background:#333"></div>
<div style="left:711px;top:470px;width:296px;height:1px;background:#333"></div>
<div style="left:711px;top:484px;width:296px;height:1px;background:#333"></div>
<div style="left:711px;top:498px;width:296px;height:1px;background:#333"></div>
<div style="left:711px;top:512px;width:296px;height:1px;background:#333"></div>
<div style="left:711px;top:526px;width:296px;height:1px;background:#333"></div>
<div style="left:711px;top:540px;width:296px;height:1px;background:#333"></div>
<div style="left:711px;top:554px;width:296px;height:1px;background:#333"></div>
<div style="left:711px;top:568px;width:296px;height:1px;background:#333"></div>
<div style="left:711px;top:176px;width:1px;height:392px;background:#333"></div>
<div style="left:973px;top:176px;width:1px;height:392px;background:#333"></div>
<div style="left:268px;top:219px;width:3px;height:3px;background:#e01010"></div>
<div style="left:491px;top:429px;width:3px;height:3px;background:#c01010"></div>
<div style="left:273px;top:191px;width:3px;height:3px;background:#111"></div>
<div style="left:620px;top:595px;width:80px;height:4px;background:#a4a4a4"></div>
<div style="left:4px;top:638px;width:697px;height:1px;background:#333"></div>
<div style="left:4px;top:652px;width:697px;height:1px;background:#333"></div>
<div style="left:4px;top:666px;width:697px;height:1px;background:#333"></div>
<div style="left:4px;top:680px;width:697px;height:1px;background:#333"></div>
<div style="left:4px;top:694px;width:697px;height:1px;background:#333"></div>
<div style="left:4px;top:708px;width:697px;height:1px;background:#333"></div>
<div style="left:4px;top:722px;width:697px;height:1px;background:#333"></div>
<div style="left:4px;top:638px;width:1px;height:98px;background:#333"></div>
<div style="left:272px;top:638px;width:1px;height:98px;background:#333"></div>
<div style="left:335px;top:638px;width:1px;height:98px;background:#333"></div>
<div style="left:414.6px;top:638px;width:1px;height:98px;background:#333"></div>
<div style="left:495px;top:638px;width:1px;height:98px;background:#333"></div>
<div style="left:574px;top:638px;width:1px;height:98px;background:#333"></div>
<div style="left:620px;top:638px;width:1px;height:98px;background:#333"></div>
<div style="left:700px;top:638px;width:1px;height:98px;background:#333"></div>
<div class="t" style="left:6px;top:177px;transform:scaleX(0.885);transform-origin:0 0;font-size:12px;color:#1a1a1a;"><b>Bricks</b></div>
<div class="t" style="left:6px;top:191px;transform:scaleX(0.885);transform-origin:0 0;font-size:12px;color:#1a1a1a;">Footings and Base</div>
<div class="t" style="left:274px;top:191px;transform:scaleX(0.885);transform-origin:0 0;font-size:12px;color:#1a1a1a;">Each</div>
<div class="t" style="left:335px;width:79.60000000000002px;text-align:center;top:191px;transform:scaleX(0.885);transform-origin:50% 0;font-size:12px;color:#1a1a1a;">$1.10</div>
<div class="t" style="left:414.6px;width:80.39999999999998px;text-align:center;top:191px;transform:scaleX(0.885);transform-origin:50% 0;font-size:12px;color:#1a1a1a;">$0.40</div>
<div class="t" style="left:574px;width:46px;text-align:center;top:191px;transform:scaleX(0.885);transform-origin:50% 0;font-size:12px;color:#1a1a1a;">1900</div>
<div class="t" style="left:620px;width:78px;text-align:right;top:191px;transform:scaleX(0.885);transform-origin:100% 0;font-size:12px;color:#1a1a1a;">$2,850.00</div>
<div class="t" style="left:6px;top:205px;transform:scaleX(0.885);transform-origin:0 0;font-size:12px;color:#1a1a1a;">Ground floor external walls &ndash; not boundary walls</div>
<div class="t" style="left:274px;top:205px;transform:scaleX(0.885);transform-origin:0 0;font-size:12px;color:#1a1a1a;">Each</div>
<div class="t" style="left:335px;width:79.60000000000002px;text-align:center;top:205px;transform:scaleX(0.885);transform-origin:50% 0;font-size:12px;color:#1a1a1a;">$1.10</div>
<div class="t" style="left:414.6px;width:80.39999999999998px;text-align:center;top:205px;transform:scaleX(0.885);transform-origin:50% 0;font-size:12px;color:#1a1a1a;">$0.40</div>
<div class="t" style="left:574px;width:46px;text-align:center;top:205px;transform:scaleX(0.885);transform-origin:50% 0;font-size:12px;color:#1a1a1a;">4000</div>
<div class="t" style="left:620px;width:78px;text-align:right;top:205px;transform:scaleX(0.885);transform-origin:100% 0;font-size:12px;color:#1a1a1a;">$6,000.00</div>
<div class="t" style="left:6px;top:219px;transform:scaleX(0.885);transform-origin:0 0;font-size:12px;color:#1a1a1a;">Boundary walls&nbsp; &ndash; Hebel 200x600x200</div>
<div class="t" style="left:274px;top:219px;transform:scaleX(0.885);transform-origin:0 0;font-size:12px;color:#1a1a1a;">Each</div>
<div class="t" style="left:335px;width:79.60000000000002px;text-align:center;top:219px;transform:scaleX(0.885);transform-origin:50% 0;font-size:12px;color:#1a1a1a;">$3.50</div>
<div class="t" style="left:414.6px;width:80.39999999999998px;text-align:center;top:219px;transform:scaleX(0.885);transform-origin:50% 0;font-size:12px;color:#1a1a1a;">$8.50</div>
<div class="t" style="left:574px;width:46px;text-align:center;top:219px;transform:scaleX(0.885);transform-origin:50% 0;font-size:12px;color:#1a1a1a;">600</div>
<div class="t" style="left:620px;width:78px;text-align:right;top:219px;transform:scaleX(0.885);transform-origin:100% 0;font-size:12px;color:#1a1a1a;">$7,200.00</div>
<div class="t" style="left:6px;top:233px;transform:scaleX(0.885);transform-origin:0 0;font-size:12px;color:#1a1a1a;">Bondbeam and reo labour for Hebel</div>
<div class="t" style="left:274px;top:233px;transform:scaleX(0.885);transform-origin:0 0;font-size:12px;color:#1a1a1a;">Hour</div>
<div class="t" style="left:335px;width:79.60000000000002px;text-align:center;top:233px;transform:scaleX(0.885);transform-origin:50% 0;font-size:12px;color:#1a1a1a;">$50.00</div>
<div class="t" style="left:574px;width:46px;text-align:center;top:233px;transform:scaleX(0.885);transform-origin:50% 0;font-size:12px;color:#1a1a1a;">4</div>
<div class="t" style="left:620px;width:78px;text-align:right;top:233px;transform:scaleX(0.885);transform-origin:100% 0;font-size:12px;color:#1a1a1a;">$200.00</div>
<div class="t" style="left:6px;top:247px;transform:scaleX(0.885);transform-origin:0 0;font-size:12px;color:#1a1a1a;">Hebel glue&nbsp; lays 25 blocks 25kg</div>
<div class="t" style="left:274px;top:247px;transform:scaleX(0.885);transform-origin:0 0;font-size:12px;color:#1a1a1a;">Bag</div>
<div class="t" style="left:414.6px;width:80.39999999999998px;text-align:center;top:247px;transform:scaleX(0.885);transform-origin:50% 0;font-size:12px;color:#1a1a1a;">$25.00</div>
<div class="t" style="left:574px;width:46px;text-align:center;top:247px;transform:scaleX(0.885);transform-origin:50% 0;font-size:12px;color:#1a1a1a;">25</div>
<div class="t" style="left:620px;width:78px;text-align:right;top:247px;transform:scaleX(0.885);transform-origin:100% 0;font-size:12px;color:#1a1a1a;">$625.00</div>
<div class="t" style="left:6px;top:261px;transform:scaleX(0.885);transform-origin:0 0;font-size:12px;color:#1a1a1a;">Fences in masonary block</div>
<div class="t" style="left:274px;top:261px;transform:scaleX(0.885);transform-origin:0 0;font-size:12px;color:#1a1a1a;">Each</div>
<div class="t" style="left:335px;width:79.60000000000002px;text-align:center;top:261px;transform:scaleX(0.885);transform-origin:50% 0;font-size:12px;color:#1a1a1a;">$3.50</div>
<div class="t" style="left:414.6px;width:80.39999999999998px;text-align:center;top:261px;transform:scaleX(0.885);transform-origin:50% 0;font-size:12px;color:#1a1a1a;">$3.20</div>
<div class="t" style="left:574px;width:46px;text-align:center;top:261px;transform:scaleX(0.885);transform-origin:50% 0;font-size:12px;color:#1a1a1a;">240</div>
<div class="t" style="left:620px;width:78px;text-align:right;top:261px;transform:scaleX(0.885);transform-origin:100% 0;font-size:12px;color:#1a1a1a;">$1,608.00</div>
<div class="t" style="left:6px;top:275px;transform:scaleX(0.885);transform-origin:0 0;font-size:12px;color:#1a1a1a;">Repairs of cracks and rebuilds</div>
<div class="t" style="left:274px;top:275px;transform:scaleX(0.885);transform-origin:0 0;font-size:12px;color:#1a1a1a;">Estimate</div>
<div class="t" style="left:495px;width:79px;text-align:center;top:275px;transform:scaleX(0.885);transform-origin:50% 0;font-size:12px;color:#1a1a1a;">$1,000.00</div>
<div class="t" style="left:574px;width:46px;text-align:center;top:275px;transform:scaleX(0.885);transform-origin:50% 0;font-size:12px;color:#1a1a1a;">1</div>
<div class="t" style="left:620px;width:78px;text-align:right;top:275px;transform:scaleX(0.885);transform-origin:100% 0;font-size:12px;color:#1a1a1a;">$1,000.00</div>
<div class="t" style="left:6px;top:303px;transform:scaleX(0.885);transform-origin:0 0;font-size:12px;color:#1a1a1a;"><b>Laying</b></div>
<div class="t" style="left:6px;top:317px;transform:scaleX(0.885);transform-origin:0 0;font-size:12px;color:#1a1a1a;">Gables and Bay Windows</div>
<div class="t" style="left:274px;top:317px;transform:scaleX(0.885);transform-origin:0 0;font-size:12px;color:#1a1a1a;">Each</div>
<div class="t" style="left:6px;top:331px;transform:scaleX(0.885);transform-origin:0 0;font-size:12px;color:#1a1a1a;">Saw Cuts</div>
<div class="t" style="left:274px;top:331px;transform:scaleX(0.885);transform-origin:0 0;font-size:12px;color:#1a1a1a;">Estimate</div>
<div class="t" style="left:495px;width:79px;text-align:center;top:331px;transform:scaleX(0.885);transform-origin:50% 0;font-size:12px;color:#1a1a1a;">$200.00</div>
<div class="t" style="left:574px;width:46px;text-align:center;top:331px;transform:scaleX(0.885);transform-origin:50% 0;font-size:12px;color:#1a1a1a;">1</div>
<div class="t" style="left:620px;width:78px;text-align:right;top:331px;transform:scaleX(0.885);transform-origin:100% 0;font-size:12px;color:#1a1a1a;">$200.00</div>
<div class="t" style="left:6px;top:345px;transform:scaleX(0.885);transform-origin:0 0;font-size:12px;color:#1a1a1a;">Sills and copings and extras</div>
<div class="t" style="left:274px;top:345px;transform:scaleX(0.885);transform-origin:0 0;font-size:12px;color:#1a1a1a;">Estimate</div>
<div class="t" style="left:495px;width:79px;text-align:center;top:345px;transform:scaleX(0.885);transform-origin:50% 0;font-size:12px;color:#1a1a1a;">$300.00</div>
<div class="t" style="left:574px;width:46px;text-align:center;top:345px;transform:scaleX(0.885);transform-origin:50% 0;font-size:12px;color:#1a1a1a;">1</div>
<div class="t" style="left:620px;width:78px;text-align:right;top:345px;transform:scaleX(0.885);transform-origin:100% 0;font-size:12px;color:#1a1a1a;">$300.00</div>
<div class="t" style="left:6px;top:359px;transform:scaleX(0.885);transform-origin:0 0;font-size:12px;color:#1a1a1a;">Height allowance</div>
<div class="t" style="left:274px;top:359px;transform:scaleX(0.885);transform-origin:0 0;font-size:12px;color:#1a1a1a;">Each</div>
<div class="t" style="left:6px;top:373px;transform:scaleX(0.885);transform-origin:0 0;font-size:12px;color:#1a1a1a;">Brick elevator hire</div>
<div class="t" style="left:274px;top:373px;transform:scaleX(0.885);transform-origin:0 0;font-size:12px;color:#1a1a1a;">Day</div>
<div class="t" style="left:6px;top:387px;transform:scaleX(0.885);transform-origin:0 0;font-size:12px;color:#1a1a1a;">Scaffolding</div>
<div class="t" style="left:274px;top:387px;transform:scaleX(0.885);transform-origin:0 0;font-size:12px;color:#1a1a1a;">Week</div>
<div class="t" style="left:6px;top:401px;transform:scaleX(0.885);transform-origin:0 0;font-size:12px;color:#1a1a1a;">Masonary blocks</div>
<div class="t" style="left:274px;top:401px;transform:scaleX(0.885);transform-origin:0 0;font-size:12px;color:#1a1a1a;">Each</div>
<div class="t" style="left:6px;top:415px;transform:scaleX(0.885);transform-origin:0 0;font-size:12px;color:#1a1a1a;">Piers +</div>
<div class="t" style="left:274px;top:415px;transform:scaleX(0.885);transform-origin:0 0;font-size:12px;color:#1a1a1a;">Each</div>
<div class="t" style="left:335px;width:79.60000000000002px;text-align:center;top:415px;transform:scaleX(0.885);transform-origin:50% 0;font-size:12px;color:#1a1a1a;">$30.00</div>
<div class="t" style="left:574px;width:46px;text-align:center;top:415px;transform:scaleX(0.885);transform-origin:50% 0;font-size:12px;color:#1a1a1a;">num?</div>
<div class="t" style="left:6px;top:429px;transform:scaleX(0.885);transform-origin:0 0;font-size:12px;color:#1a1a1a;">Sand and cement sundries per 800</div>
<div class="t" style="left:274px;top:429px;transform:scaleX(0.885);transform-origin:0 0;font-size:12px;color:#1a1a1a;">See Below</div>
<div class="t" style="left:414.6px;width:80.39999999999998px;text-align:center;top:429px;transform:scaleX(0.885);transform-origin:50% 0;font-size:12px;color:#1a1a1a;">$124.95</div>
<div class="t" style="left:574px;width:46px;text-align:center;top:429px;transform:scaleX(0.885);transform-origin:50% 0;font-size:12px;color:#1a1a1a;">12</div>
<div class="t" style="left:620px;width:78px;text-align:right;top:429px;transform:scaleX(0.885);transform-origin:100% 0;font-size:12px;color:#1a1a1a;">$1,499.40</div>
<div class="t" style="left:6px;top:443px;transform:scaleX(0.885);transform-origin:0 0;font-size:12px;color:#1a1a1a;">Wall vents</div>
<div class="t" style="left:274px;top:443px;transform:scaleX(0.885);transform-origin:0 0;font-size:12px;color:#1a1a1a;">Each</div>
<div class="t" style="left:414.6px;width:80.39999999999998px;text-align:center;top:443px;transform:scaleX(0.885);transform-origin:50% 0;font-size:12px;color:#1a1a1a;">$5.00</div>
<div class="t" style="left:574px;width:46px;text-align:center;top:443px;transform:scaleX(0.885);transform-origin:50% 0;font-size:12px;color:#1a1a1a;">53</div>
<div class="t" style="left:620px;width:78px;text-align:right;top:443px;transform:scaleX(0.885);transform-origin:100% 0;font-size:12px;color:#1a1a1a;">$265.00</div>
<div class="t" style="left:6px;top:457px;transform:scaleX(0.885);transform-origin:0 0;font-size:12px;color:#1a1a1a;">Brick Cleaning</div>
<div class="t" style="left:274px;top:457px;transform:scaleX(0.885);transform-origin:0 0;font-size:12px;color:#1a1a1a;">Sq Metre</div>
<div class="t" style="left:6px;top:471px;transform:scaleX(0.885);transform-origin:0 0;font-size:12px;color:#1a1a1a;">Flashings and Dampcourse</div>
<div class="t" style="left:274px;top:471px;transform:scaleX(0.885);transform-origin:0 0;font-size:12px;color:#1a1a1a;">Roll</div>
<div class="t" style="left:414.6px;width:80.39999999999998px;text-align:center;top:471px;transform:scaleX(0.885);transform-origin:50% 0;font-size:12px;color:#1a1a1a;">$25.00</div>
<div class="t" style="left:574px;width:46px;text-align:center;top:471px;transform:scaleX(0.885);transform-origin:50% 0;font-size:12px;color:#1a1a1a;">4</div>
<div class="t" style="left:620px;width:78px;text-align:right;top:471px;transform:scaleX(0.885);transform-origin:100% 0;font-size:12px;color:#1a1a1a;">$100.00</div>
<div class="t" style="left:6px;top:485px;transform:scaleX(0.885);transform-origin:0 0;font-size:12px;color:#1a1a1a;">Joint Filling with colour filler</div>
<div class="t" style="left:274px;top:485px;transform:scaleX(0.885);transform-origin:0 0;font-size:12px;color:#1a1a1a;">Lin Metre</div>
<div class="t" style="left:414.6px;width:80.39999999999998px;text-align:center;top:485px;transform:scaleX(0.885);transform-origin:50% 0;font-size:12px;color:#1a1a1a;">$7.50</div>
<div class="t" style="left:574px;width:46px;text-align:center;top:485px;transform:scaleX(0.885);transform-origin:50% 0;font-size:12px;color:#1a1a1a;">90</div>
<div class="t" style="left:620px;width:78px;text-align:right;top:485px;transform:scaleX(0.885);transform-origin:100% 0;font-size:12px;color:#1a1a1a;">$675.00</div>
<div class="t" style="left:6px;top:499px;transform:scaleX(0.885);transform-origin:0 0;font-size:12px;color:#1a1a1a;">Sisalation or Wall Wrap</div>
<div class="t" style="left:274px;top:499px;transform:scaleX(0.885);transform-origin:0 0;font-size:12px;color:#1a1a1a;">Roll</div>
<div class="t" style="left:414.6px;width:80.39999999999998px;text-align:center;top:499px;transform:scaleX(0.885);transform-origin:50% 0;font-size:12px;color:#1a1a1a;">$125.00</div>
<div class="t" style="left:574px;width:46px;text-align:center;top:499px;transform:scaleX(0.885);transform-origin:50% 0;font-size:12px;color:#1a1a1a;">3</div>
<div class="t" style="left:620px;width:78px;text-align:right;top:499px;transform:scaleX(0.885);transform-origin:100% 0;font-size:12px;color:#1a1a1a;">$375.00</div>
<div class="t" style="left:6px;top:513px;transform:scaleX(0.885);transform-origin:0 0;font-size:12px;color:#1a1a1a;">Spotties</div>
<div class="t" style="left:274px;top:513px;transform:scaleX(0.885);transform-origin:0 0;font-size:12px;color:#1a1a1a;">Box</div>
<div class="t" style="left:414.6px;width:80.39999999999998px;text-align:center;top:513px;transform:scaleX(0.885);transform-origin:50% 0;font-size:12px;color:#1a1a1a;">$25.00</div>
<div class="t" style="left:574px;width:46px;text-align:center;top:513px;transform:scaleX(0.885);transform-origin:50% 0;font-size:12px;color:#1a1a1a;">1</div>
<div class="t" style="left:620px;width:78px;text-align:right;top:513px;transform:scaleX(0.885);transform-origin:100% 0;font-size:12px;color:#1a1a1a;">$25.00</div>
<div class="t" style="left:6px;top:527px;transform:scaleX(0.885);transform-origin:0 0;font-size:12px;color:#1a1a1a;"><i>Leave these cells (A28 to G28) blank for cell inserts</i></div>
<div class="t" style="left:6px;top:569px;transform:scaleX(0.885);transform-origin:0 0;font-size:12px;color:#1a1a1a;">Contingency</div>
<div class="t" style="left:274px;top:569px;transform:scaleX(0.885);transform-origin:0 0;font-size:12px;color:#1a1a1a;">Percent %</div>
<div class="t" style="left:497px;top:583px;transform:scaleX(0.885);transform-origin:0 0;font-size:12px;font-weight:bold;color:#222">Total excl tax</div>
<div class="t" style="left:620px;width:78px;text-align:right;top:583px;transform:scaleX(0.885);transform-origin:100% 0;font-size:12px;font-weight:bold;color:#222">$22,922.40</div>
<div class="t" style="left:4px;width:268px;text-align:center;top:625px;transform:scaleX(0.885);transform-origin:50% 0;font-size:12px;font-weight:bold;color:#222">Calculations Area</div>
<div class="t" style="left:272px;width:63px;text-align:center;top:625px;transform:scaleX(0.885);transform-origin:50% 0;font-size:12px;font-weight:bold;color:#222">Per</div>
<div class="t" style="left:335px;width:79.60000000000002px;text-align:center;top:625px;transform:scaleX(0.885);transform-origin:50% 0;font-size:12px;font-weight:bold;color:#222">Labour</div>
<div class="t" style="left:414.6px;width:80.39999999999998px;text-align:center;top:625px;transform:scaleX(0.885);transform-origin:50% 0;font-size:12px;font-weight:bold;color:#222">+Materials</div>
<div class="t" style="left:495px;width:79px;text-align:center;top:625px;transform:scaleX(0.885);transform-origin:50% 0;font-size:12px;font-weight:bold;color:#222">+ Other</div>
<div class="t" style="left:574px;width:46px;text-align:center;top:625px;transform:scaleX(0.885);transform-origin:50% 0;font-size:12px;font-weight:bold;color:#222">x Unit</div>
<div class="t" style="left:620px;width:80px;text-align:center;top:625px;transform:scaleX(0.885);transform-origin:50% 0;font-size:12px;font-weight:bold;color:#222">=&nbsp; Total</div>
<div class="t" style="left:6px;top:639px;transform:scaleX(0.885);transform-origin:0 0;font-size:12px;color:#1a1a1a;">Brick Sand per 800 bricks</div>
<div class="t" style="left:274px;top:639px;transform:scaleX(0.885);transform-origin:0 0;font-size:12px;color:#1a1a1a;">Per</div>
<div class="t" style="left:414.6px;width:78.39999999999998px;text-align:right;top:639px;transform:scaleX(0.885);transform-origin:100% 0;font-size:12px;color:#1a1a1a;">$45.00</div>
<div class="t" style="left:574px;width:46px;text-align:center;top:639px;transform:scaleX(0.885);transform-origin:50% 0;font-size:12px;color:#1a1a1a;">1</div>
<div class="t" style="left:620px;width:78px;text-align:right;top:639px;transform:scaleX(0.885);transform-origin:100% 0;font-size:12px;color:#1a1a1a;">$45.00</div>
<div class="t" style="left:6px;top:653px;transform:scaleX(0.885);transform-origin:0 0;font-size:12px;color:#1a1a1a;">Cement per 800 bricks</div>
<div class="t" style="left:274px;top:653px;transform:scaleX(0.885);transform-origin:0 0;font-size:12px;color:#1a1a1a;">Per</div>
<div class="t" style="left:414.6px;width:78.39999999999998px;text-align:right;top:653px;transform:scaleX(0.885);transform-origin:100% 0;font-size:12px;color:#1a1a1a;">$8.40</div>
<div class="t" style="left:574px;width:46px;text-align:center;top:653px;transform:scaleX(0.885);transform-origin:50% 0;font-size:12px;color:#1a1a1a;">4</div>
<div class="t" style="left:620px;width:78px;text-align:right;top:653px;transform:scaleX(0.885);transform-origin:100% 0;font-size:12px;color:#1a1a1a;">$33.60</div>
<div class="t" style="left:6px;top:667px;transform:scaleX(0.885);transform-origin:0 0;font-size:12px;color:#1a1a1a;">Ties and misc per 800</div>
<div class="t" style="left:274px;top:667px;transform:scaleX(0.885);transform-origin:0 0;font-size:12px;color:#1a1a1a;">Per</div>
<div class="t" style="left:414.6px;width:78.39999999999998px;text-align:right;top:667px;transform:scaleX(0.885);transform-origin:100% 0;font-size:12px;color:#1a1a1a;">$30.00</div>
<div class="t" style="left:574px;width:46px;text-align:center;top:667px;transform:scaleX(0.885);transform-origin:50% 0;font-size:12px;color:#1a1a1a;">1</div>
<div class="t" style="left:620px;width:78px;text-align:right;top:667px;transform:scaleX(0.885);transform-origin:100% 0;font-size:12px;color:#1a1a1a;">$30.00</div>
<div class="t" style="left:6px;top:681px;transform:scaleX(0.885);transform-origin:0 0;font-size:12px;color:#1a1a1a;">Lime per 800 bricks</div>
<div class="t" style="left:274px;top:681px;transform:scaleX(0.885);transform-origin:0 0;font-size:12px;color:#1a1a1a;">Per</div>
<div class="t" style="left:414.6px;width:78.39999999999998px;text-align:right;top:681px;transform:scaleX(0.885);transform-origin:100% 0;font-size:12px;color:#1a1a1a;">$5.30</div>
<div class="t" style="left:574px;width:46px;text-align:center;top:681px;transform:scaleX(0.885);transform-origin:50% 0;font-size:12px;color:#1a1a1a;">2</div>
<div class="t" style="left:620px;width:78px;text-align:right;top:681px;transform:scaleX(0.885);transform-origin:100% 0;font-size:12px;color:#1a1a1a;">$10.60</div>
<div class="t" style="left:6px;top:695px;transform:scaleX(0.885);transform-origin:0 0;font-size:12px;color:#1a1a1a;">Plasticizer</div>
<div class="t" style="left:274px;top:695px;transform:scaleX(0.885);transform-origin:0 0;font-size:12px;color:#1a1a1a;">Each</div>
<div class="t" style="left:414.6px;width:78.39999999999998px;text-align:right;top:695px;transform:scaleX(0.885);transform-origin:100% 0;font-size:12px;color:#1a1a1a;">$11.50</div>
<div class="t" style="left:574px;width:46px;text-align:center;top:695px;transform:scaleX(0.885);transform-origin:50% 0;font-size:12px;color:#1a1a1a;">0.5</div>
<div class="t" style="left:620px;width:78px;text-align:right;top:695px;transform:scaleX(0.885);transform-origin:100% 0;font-size:12px;color:#1a1a1a;">$5.75</div>
<div class="t" style="left:6px;top:723px;transform:scaleX(0.885);transform-origin:0 0;font-size:12px;color:#1a1a1a;"><b>Total per 800</b></div>
<div class="t" style="left:620px;width:78px;text-align:right;top:723px;transform:scaleX(0.885);transform-origin:100% 0;font-size:12px;color:#1a1a1a;"><b>$124.95</b></div>
<div class="t" style="left:713px;top:177px;transform:scaleX(0.885);transform-origin:0 0;font-size:12px;color:#1a1a1a;">Paul Skaines Bricklaying</div>
<div class="t" style="left:713px;top:191px;transform:scaleX(0.885);transform-origin:0 0;font-size:12px;color:#1a1a1a;">CPM Bricks</div>
<div class="t" style="left:713px;top:205px;transform:scaleX(0.885);transform-origin:0 0;font-size:12px;color:#1a1a1a;">Col Smith</div>
<div class="t" style="left:713px;top:219px;transform:scaleX(0.885);transform-origin:0 0;font-size:12px;color:#1a1a1a;">Paul Skaines Bricklaying</div>
<div class="t" style="left:1004px;top:177px;font-size:12px;color:#1a1a1a;">$1</div>
<div class="t" style="left:1004px;top:191px;font-size:12px;color:#1a1a1a;">$1</div>
<div class="t" style="left:1004px;top:219px;font-size:12px;color:#1a1a1a;">$1</div>
<div class="t" style="left:713px;top:527px;transform:scaleX(0.885);transform-origin:0 0;font-size:12px;color:#1a1a1a;"><i>Leave these cells (I28 to N28) blank for cell inserts</i></div>
<div class="t" style="left:713px;top:541px;transform:scaleX(0.885);transform-origin:0 0;font-size:12px;font-weight:bold;color:#111">Bricklayer</div>
<div class="t" style="left:713px;top:555px;transform:scaleX(0.885);transform-origin:0 0;font-size:12px;font-weight:bold;color:#111">Excluding tax total</div>
<div class="t" style="left:1004px;top:541px;font-size:12px;font-weight:bold;color:#111">$1</div>
<div class="t" style="left:1004px;top:555px;font-size:12px;font-weight:bold;color:#111">$1</div>
<div style="left:1007px;top:148px;width:15px;height:583px;background:#eaeaec;border-left:1px solid #d8d8dc;box-sizing:border-box"></div>
<div style="left:1007.5px;top:148.5px;width:13.5px;height:2px;background:#111"></div>
<svg style="left:1011px;top:155px" width="7" height="5"><path d="M0 4h6L3 1z" fill="#333"/></svg>
<div style="left:1008.5px;top:167.5px;width:11px;height:197px;background:linear-gradient(90deg,#f4f4f4,#dcdcdc);border:1px solid #a8a8a8;border-radius:2px;box-sizing:border-box"></div>
<div style="left:1011.5px;top:262.0px;width:5.5px;height:1px;background:#8a8a8a"></div>
<div style="left:1011.5px;top:264.5px;width:5.5px;height:1px;background:#8a8a8a"></div>
<div style="left:1011.5px;top:267.0px;width:5.5px;height:1px;background:#8a8a8a"></div>
<svg style="left:1011px;top:721px" width="7" height="5"><path d="M0 1h6L3 4z" fill="#333"/></svg>
<div style="left:4px;top:731px;width:1003px;height:15px;background:#f2f2f4"></div>
<div style="left:6.7px;top:733px;width:13.0px;height:11px;background:linear-gradient(#f4f4f6,#d8d8de);border:1px solid #9a9aa4;border-radius:2px;box-sizing:border-box"></div>
<div style="left:20.7px;top:733px;width:11.599999999999998px;height:11px;background:linear-gradient(#f4f4f6,#d8d8de);border:1px solid #9a9aa4;border-radius:2px;box-sizing:border-box"></div>
<div style="left:34px;top:733px;width:11.700000000000003px;height:11px;background:linear-gradient(#f4f4f6,#d8d8de);border:1px solid #9a9aa4;border-radius:2px;box-sizing:border-box"></div>
<div style="left:47.3px;top:733px;width:11.700000000000003px;height:11px;background:linear-gradient(#f4f4f6,#d8d8de);border:1px solid #9a9aa4;border-radius:2px;box-sizing:border-box"></div>
<svg style="left:9px;top:735px" width="8" height="7"><path d="M1 0v7M7 0v7L2 3.5z" stroke="#222" fill="#222"/></svg>
<svg style="left:24px;top:735px" width="8" height="7"><path d="M6 0v7L1 3.5z" fill="#222"/></svg>
<svg style="left:37px;top:735px" width="8" height="7"><path d="M2 0v7l5-3.5z" fill="#222"/></svg>
<svg style="left:50px;top:735px" width="9" height="7"><path d="M1 0v7l5-3.5zM7 0v7" stroke="#222" fill="#222"/></svg>
<svg style="left:0;top:731px" width="1024" height="15"><rect x="612" y="1.5" width="53" height="13" fill="#fff"/><path d="M62 1.5H709" stroke="#a0a0a8" stroke-width="1"/><path d="M62 13.5H612M665 13.5H709" stroke="#9a9aa2" stroke-width="1.2"/><path d="M62.7 13.5L66.7 1.5" stroke="#7a7a84" stroke-width="1"/><path d="M115.3 13.5L119.3 1.5" stroke="#7a7a84" stroke-width="1"/><path d="M154.7 13.5L158.7 1.5" stroke="#7a7a84" stroke-width="1"/><path d="M213.3 13.5L217.3 1.5" stroke="#7a7a84" stroke-width="1"/><path d="M278.7 13.5L282.7 1.5" stroke="#7a7a84" stroke-width="1"/><path d="M339.6 13.5L343.6 1.5" stroke="#7a7a84" stroke-width="1"/><path d="M394.7 13.5L398.7 1.5" stroke="#7a7a84" stroke-width="1"/><path d="M450.4 13.5L454.4 1.5" stroke="#7a7a84" stroke-width="1"/><path d="M508.8 13.5L512.8 1.5" stroke="#7a7a84" stroke-width="1"/><path d="M562.3 13.5L566.3 1.5" stroke="#7a7a84" stroke-width="1"/><path d="M611 1.5L615 13.5" stroke="#7a7a84" stroke-width="1"/><path d="M665.3 13.5L669.3 1.5" stroke="#7a7a84" stroke-width="1"/></svg>
<div class="t" style="left:70px;top:730.3px;font-size:10.5px;color:#222;transform:scaleX(0.91);transform-origin:0 0;">Schedule</div>
<div class="t" style="left:118.7px;top:730.3px;font-size:10.5px;color:#222;transform:scaleX(0.91);transform-origin:0 0;">Pricing</div>
<div class="t" style="left:160px;top:730.3px;font-size:10.5px;color:#222;transform:scaleX(0.91);transform-origin:0 0;">Worksheet</div>
<div class="t" style="left:217.3px;top:730.3px;font-size:10.5px;color:#222;transform:scaleX(0.91);transform-origin:0 0;">Preliminaries</div>
<div class="t" style="left:282.7px;top:730.3px;font-size:10.5px;color:#222;transform:scaleX(0.91);transform-origin:0 0;">Demolisher</div>
<div class="t" style="left:342.7px;top:730.3px;font-size:10.5px;color:#222;transform:scaleX(0.91);transform-origin:0 0;">Equip_Hire</div>
<div class="t" style="left:400px;top:730.3px;font-size:10.5px;color:#222;transform:scaleX(0.91);transform-origin:0 0;">Excavator</div>
<div class="t" style="left:453.3px;top:730.3px;font-size:10.5px;color:#222;transform:scaleX(0.91);transform-origin:0 0;">Reinforcing</div>
<div class="t" style="left:513.3px;top:730.3px;font-size:10.5px;color:#222;transform:scaleX(0.91);transform-origin:0 0;">Concretor</div>
<div class="t" style="left:566.7px;top:730.3px;font-size:10.5px;color:#222;transform:scaleX(0.91);transform-origin:0 0;">Steel_Fab</div>
<div class="t" style="left:616px;top:730.3px;font-size:10.5px;color:#222;transform:scaleX(0.91);transform-origin:0 0;font-weight:bold;color:#111;">Bricklayer</div>
<div class="t" style="left:670.7px;top:730.3px;font-size:10.5px;color:#222;transform:scaleX(0.91);transform-origin:0 0;">Carpent</div>
<div style="left:709px;top:731px;width:2px;height:15px;background:#555"></div>
<div style="left:711px;top:731px;width:296px;height:15px;background:#eaeaec"></div>
<svg style="left:714px;top:735px" width="6" height="7"><path d="M5 0v7L1 3.5z" fill="#333"/></svg>
<div style="left:726px;top:732.5px;width:92.7px;height:11px;background:linear-gradient(#f6f6f6,#d8d8d8);border:1px solid #a8a8a8;border-radius:2px;box-sizing:border-box"></div>
<div style="left:768px;top:735px;width:1px;height:6px;background:#888"></div>
<div style="left:770px;top:735px;width:1px;height:6px;background:#888"></div>
<div style="left:772px;top:735px;width:1px;height:6px;background:#888"></div>
<svg style="left:995px;top:735px" width="6" height="7"><path d="M1 0v7l4-3.5z" fill="#333"/></svg>
<div style="left:1005px;top:731px;width:2px;height:14px;background:#111"></div>
<div style="left:1007px;top:731px;width:15px;height:15px;background:#eaeaec"></div>
<div style="left:4px;top:746px;width:1018px;height:16px;background:#ebebef"></div>
<div style="left:6.7px;top:748px;width:227.20000000000002px;height:14px;background:#f0f0f2;border:1px solid #b8b8c0;border-radius:1px;box-sizing:border-box"></div>
<div class="t" style="left:11.7px;top:748.8px;font-size:10px;transform:scaleX(0.93);transform-origin:0 0;color:#222">Sheet 13 / 40</div>
<div style="left:237.9px;top:748px;width:246.49999999999997px;height:14px;background:#f0f0f2;border:1px solid #b8b8c0;border-radius:1px;box-sizing:border-box"></div>
<div class="t" style="left:242.9px;top:748.8px;font-size:10px;transform:scaleX(0.93);transform-origin:0 0;color:#222">TAB_Bricklayer</div>
<div style="left:486.7px;top:748px;width:41.80000000000001px;height:14px;background:#f0f0f2;border:1px solid #b8b8c0;border-radius:1px;box-sizing:border-box"></div>
<div class="t" style="left:486.7px;width:41.80000000000001px;text-align:center;top:748.8px;font-size:10px;transform:scaleX(0.93);transform-origin:50% 0;color:#222">100%</div>
<div style="left:532px;top:748px;width:41.299999999999955px;height:14px;background:#f0f0f2;border:1px solid #b8b8c0;border-radius:1px;box-sizing:border-box"></div>
<div style="left:576.7px;top:748px;width:35.799999999999955px;height:14px;background:#f0f0f2;border:1px solid #b8b8c0;border-radius:1px;box-sizing:border-box"></div>
<div class="t" style="left:576.7px;width:35.799999999999955px;text-align:center;top:748.8px;font-size:10px;transform:scaleX(0.93);transform-origin:50% 0;color:#222">STD</div>
<div style="left:615.3px;top:748px;width:22.600000000000023px;height:14px;background:#f0f0f2;border:1px solid #b8b8c0;border-radius:1px;box-sizing:border-box"></div>
<div style="left:640.7px;top:748px;width:21.59999999999991px;height:14px;background:#f0f0f2;border:1px solid #b8b8c0;border-radius:1px;box-sizing:border-box"></div>
<div style="left:665.7px;top:748px;width:352.29999999999995px;height:14px;background:#f0f0f2;border:1px solid #b8b8c0;border-radius:1px;box-sizing:border-box"></div>
<div class="t" style="left:665.7px;width:352.29999999999995px;text-align:center;top:748.8px;font-size:10px;transform:scaleX(0.93);transform-origin:50% 0;color:#222">Sum=0</div>
<div style="left:1022px;top:21px;width:2px;height:743px;background:#8292a6"></div>
</div></body></html>
